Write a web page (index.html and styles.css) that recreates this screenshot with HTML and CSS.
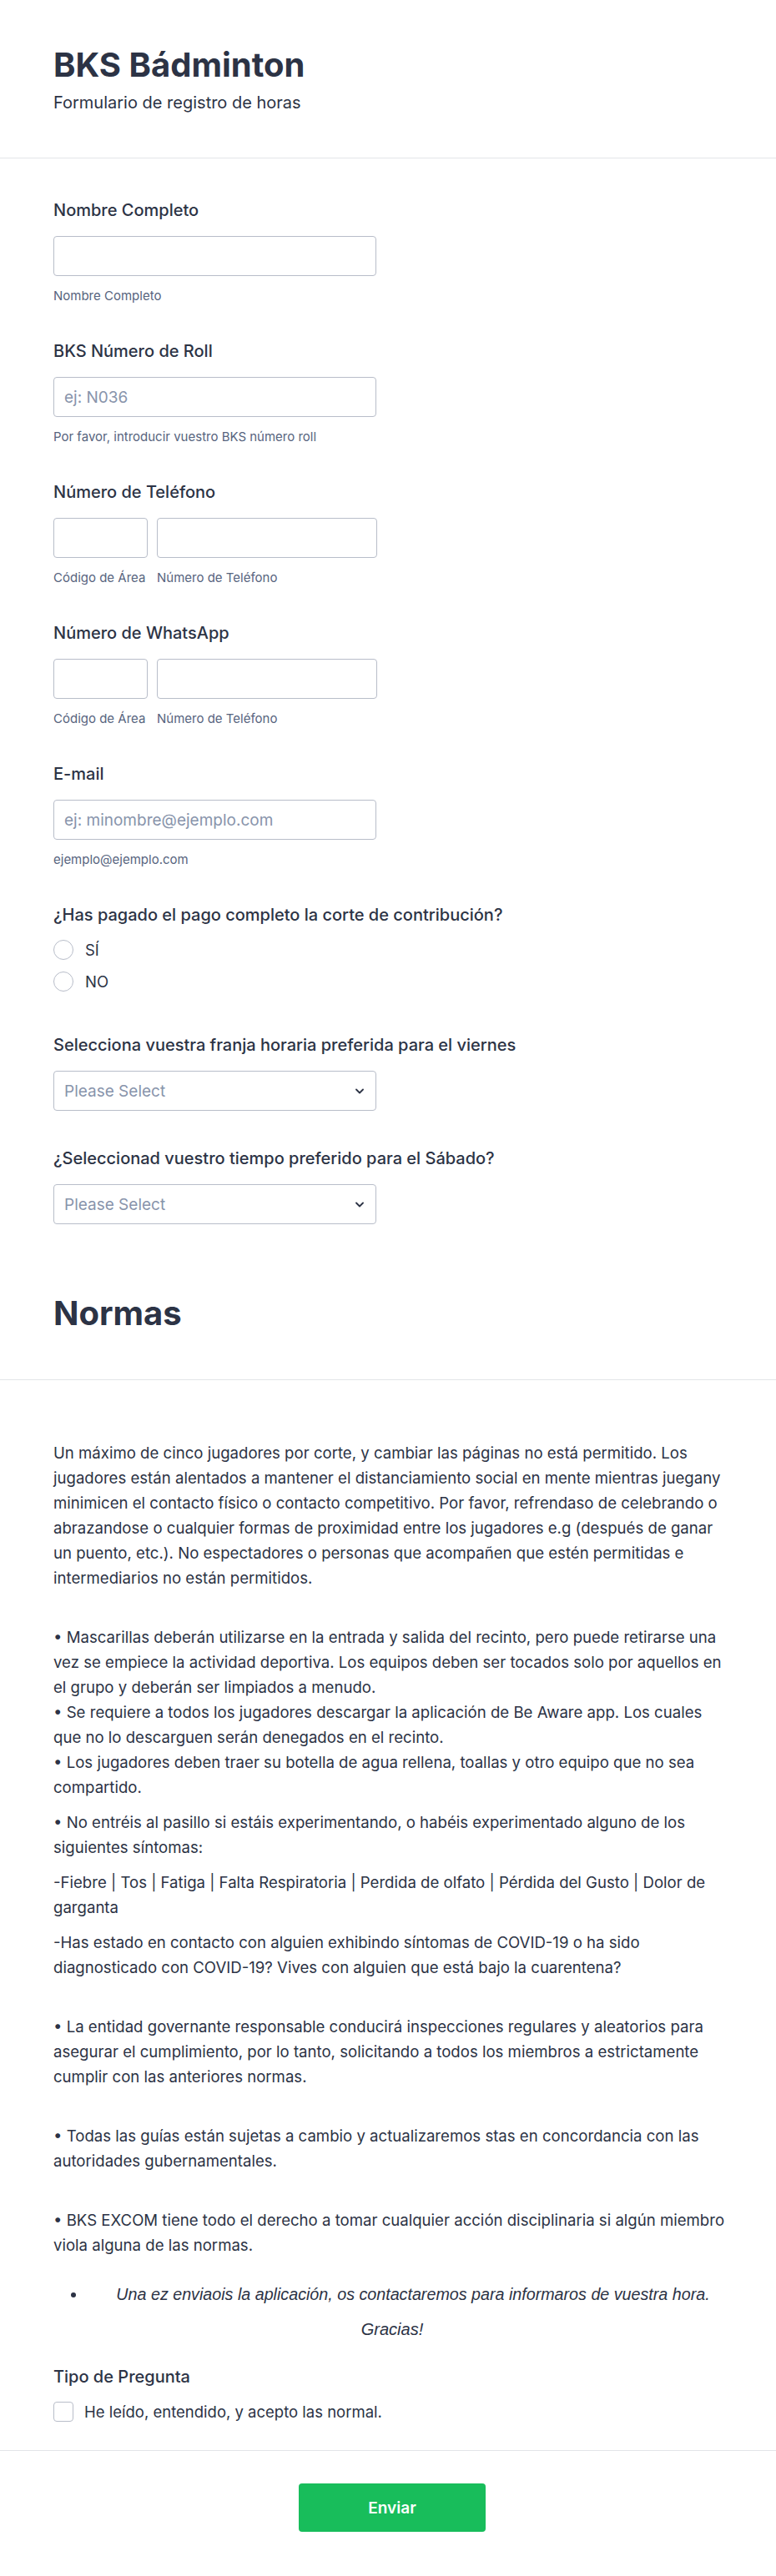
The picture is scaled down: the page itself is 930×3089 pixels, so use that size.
FILE: index.html
```html
<!DOCTYPE html>
<html lang="es">
<head>
    <meta charset="utf-8">
    <title>BKS Bádminton</title>
    <link rel="stylesheet" href="styles.css">
</head>
<body>
    <header class="form-header">
        <h1 class="form-title">BKS Bádminton</h1>
        <div class="form-subtitle">Formulario de registro de horas</div>
    </header>

    <section class="form-section">
        <div class="field">
            <label class="field-label" for="nombre">Nombre Completo</label>
            <input class="text-input" id="nombre" type="text">
            <span class="sublabel">Nombre Completo</span>
        </div>

        <div class="field">
            <label class="field-label" for="roll">BKS Número de Roll</label>
            <input class="text-input" id="roll" type="text" placeholder="ej: N036">
            <span class="sublabel">Por favor, introducir vuestro BKS número roll</span>
        </div>

        <div class="field">
            <label class="field-label">Número de Teléfono</label>
            <div class="phone-row">
                <div class="phone-area">
                    <input class="text-input" type="tel">
                    <span class="sublabel">Código de Área</span>
                </div>
                <div class="phone-number">
                    <input class="text-input" type="tel">
                    <span class="sublabel">Número de Teléfono</span>
                </div>
            </div>
        </div>

        <div class="field">
            <label class="field-label">Número de WhatsApp</label>
            <div class="phone-row">
                <div class="phone-area">
                    <input class="text-input" type="tel">
                    <span class="sublabel">Código de Área</span>
                </div>
                <div class="phone-number">
                    <input class="text-input" type="tel">
                    <span class="sublabel">Número de Teléfono</span>
                </div>
            </div>
        </div>

        <div class="field">
            <label class="field-label" for="email">E-mail</label>
            <input class="text-input" id="email" type="email" placeholder="ej: minombre@ejemplo.com">
            <span class="sublabel">ejemplo@ejemplo.com</span>
        </div>

        <div class="field field-radio">
            <span class="field-label">¿Has pagado el pago completo la corte de contribución?</span>
            <div class="options">
                <label class="option"><input type="radio" name="pagado"> SÍ</label>
                <label class="option"><input type="radio" name="pagado"> NO</label>
            </div>
        </div>

        <div class="field">
            <label class="field-label" for="viernes">Selecciona vuestra franja horaria preferida para el viernes</label>
            <div class="select-wrap">
                <select class="select-input" id="viernes">
                    <option>Please Select</option>
                </select>
                <svg class="select-arrow" width="10" height="7" viewBox="0 0 10 7"><path d="M1 1.5l4 4 4-4" fill="none" stroke="#2c3345" stroke-width="1.8" stroke-linecap="round" stroke-linejoin="round"/></svg>
            </div>
        </div>

        <div class="field">
            <label class="field-label" for="sabado">¿Seleccionad vuestro tiempo preferido para el Sábado?</label>
            <div class="select-wrap">
                <select class="select-input" id="sabado">
                    <option>Please Select</option>
                </select>
                <svg class="select-arrow" width="10" height="7" viewBox="0 0 10 7"><path d="M1 1.5l4 4 4-4" fill="none" stroke="#2c3345" stroke-width="1.8" stroke-linecap="round" stroke-linejoin="round"/></svg>
            </div>
        </div>
    </section>

    <header class="section-header">
        <h2 class="section-title">Normas</h2>
    </header>

    <section class="rules">
        <p>Un máximo de cinco jugadores por corte, y cambiar las páginas no está permitido. Los jugadores están alentados a mantener el distanciamiento social en mente mientras juegany minimicen el contacto físico o contacto competitivo. Por favor, refrendaso de celebrando o abrazandose o cualquier formas de proximidad entre los jugadores e.g (después de ganar un puento, etc.). No espectadores o personas que acompañen que estén permitidas e intermediarios no están permitidos.</p>
        <p class="spaced">• Mascarillas deberán utilizarse en la entrada y salida del recinto, pero puede retirarse una vez se empiece la actividad deportiva. Los equipos deben ser tocados solo por aquellos en el grupo y deberán ser limpiados a menudo.<br>• Se requiere a todos los jugadores descargar la aplicación de Be Aware app. Los cuales que no lo descarguen serán denegados en el recinto.<br>• Los jugadores deben traer su botella de agua rellena, toallas y otro equipo que no sea compartido.</p>
        <p>• No entréis al pasillo si estáis experimentando, o habéis experimentado alguno de los siguientes síntomas:</p>
        <p>-Fiebre | Tos | Fatiga | Falta Respiratoria | Perdida de olfato | Pérdida del Gusto | Dolor de garganta</p>
        <p>-Has estado en contacto con alguien exhibindo síntomas de COVID-19 o ha sido diagnosticado con COVID-19? Vives con alguien que está bajo la cuarentena?</p>
        <p class="spaced">• La entidad governante responsable conducirá inspecciones regulares y aleatorios para asegurar el cumplimiento, por lo tanto, solicitando a todos los miembros a estrictamente cumplir con las anteriores normas.</p>
        <p class="spaced">• Todas las guías están sujetas a cambio y actualizaremos stas en concordancia con las autoridades gubernamentales.</p>
        <p class="spaced">• BKS EXCOM tiene todo el derecho a tomar cualquier acción disciplinaria si algún miembro viola alguna de las normas.</p>
        <ul class="notice">
            <li>Una ez enviaois la aplicación, os contactaremos para informaros de vuestra hora.</li>
        </ul>
        <p class="thanks">Gracias!</p>
    </section>

    <section class="form-section form-section-last">
        <div class="field field-check">
            <span class="field-label">Tipo de Pregunta</span>
            <label class="option"><input type="checkbox"> He leído, entendido, y acepto las normal.</label>
        </div>
    </section>

    <footer class="form-footer">
        <button class="submit-btn" type="submit">Enviar</button>
    </footer>
</body>
</html>
```

FILE: styles.css
```css
body {
    margin: 0;
    background: #fff;
    color: #2c3345;
    font-family: "Inter", "Noto Sans", sans-serif;
}

/* page header */
.form-header {
    padding: 54px 54px 54px 64px;
    border-bottom: 1px solid #e3e5e8;
}
.form-title {
    margin: 0 0 9px;
    font-size: 40px;
    line-height: 48px;
    font-weight: 700;
}
.form-subtitle {
    font-size: 20px;
    line-height: 24px;
}

/* fields */
.form-section {
    padding: 50px 54px 0 64px;
}
.field {
    margin-bottom: 45px;
}
.field-label {
    display: block;
    margin-bottom: 19px;
    font-size: 20px;
    line-height: 24px;
    font-weight: 500;
}
.text-input,
.select-input {
    display: block;
    box-sizing: border-box;
    width: 387px;
    height: 48px;
    margin: 0;
    padding: 0 12px;
    border: 1px solid #b8bdc9;
    border-radius: 4px;
    background: #fff;
    color: #2c3345;
    font-family: inherit;
    font-size: 19px;
}
.text-input::placeholder {
    color: #8894ab;
}
.sublabel {
    display: block;
    margin-top: 15px;
    font-size: 15px;
    line-height: 18px;
    color: #57647e;
}

.phone-row {
    display: flex;
    gap: 11px;
}
.phone-area .text-input { width: 113px; }
.phone-number .text-input { width: 264px; }

.field-radio {
    margin-bottom: 52px;
}
.field-radio .field-label,
.field-check .field-label {
    margin-bottom: 18px;
}
.options {
    display: flex;
    flex-direction: column;
    gap: 14px;
}
.option {
    display: flex;
    align-items: center;
    gap: 14px;
    height: 24px;
    font-size: 18.5px;
    line-height: 24px;
}
.option input {
    appearance: none;
    width: 24px;
    height: 24px;
    margin: 0;
    border: 1px solid #b8bdc9;
    background: #fff;
    flex-shrink: 0;
}
.option input[type="radio"] { border-radius: 50%; }
.option input[type="checkbox"] { border-radius: 4px; }
.field-check .option { gap: 13px; }

.select-wrap {
    position: relative;
    width: 387px;
}
.select-input {
    appearance: none;
    color: #8894ab;
}
.select-arrow {
    position: absolute;
    right: 15px;
    top: 21px;
    pointer-events: none;
}

/* rules block */
.section-header {
    padding: 38px 54px 55px 64px;
    border-bottom: 1px solid #e3e5e8;
}
.section-title {
    margin: 0;
    font-size: 40px;
    line-height: 48px;
    font-weight: 700;
}
.rules {
    padding: 72px 60px 0 64px;
    font-size: 18.6px;
    line-height: 30px;
}
.rules p {
    margin: 12px 0 0;
}
.rules p:first-child { margin-top: 0; }
.rules p.spaced { margin-top: 41px; }

.notice {
    margin: 29px -16px 0 0;
    padding-left: 40px;
    font-family: "Liberation Sans", Arial, sans-serif;
    font-style: italic;
    font-size: 19.7px;
    text-align: center;
}
.rules p.thanks {
    margin-right: -6px;
    font-family: "Liberation Sans", Arial, sans-serif;
    font-style: italic;
    font-size: 20px;
    text-align: center;
}

.form-section-last {
    padding-top: 30px;
    padding-bottom: 34px;
}
.form-section-last .field {
    margin-bottom: 0;
}

/* submit */
.form-footer {
    display: flex;
    justify-content: center;
    padding: 39px 54px 51px 64px;
    border-top: 1px solid #e3e5e8;
}
.submit-btn {
    width: 224px;
    height: 58px;
    border: none;
    border-radius: 4px;
    background: #18bd5b;
    color: #fff;
    font-family: inherit;
    font-size: 19px;
    font-weight: 600;
}
```
